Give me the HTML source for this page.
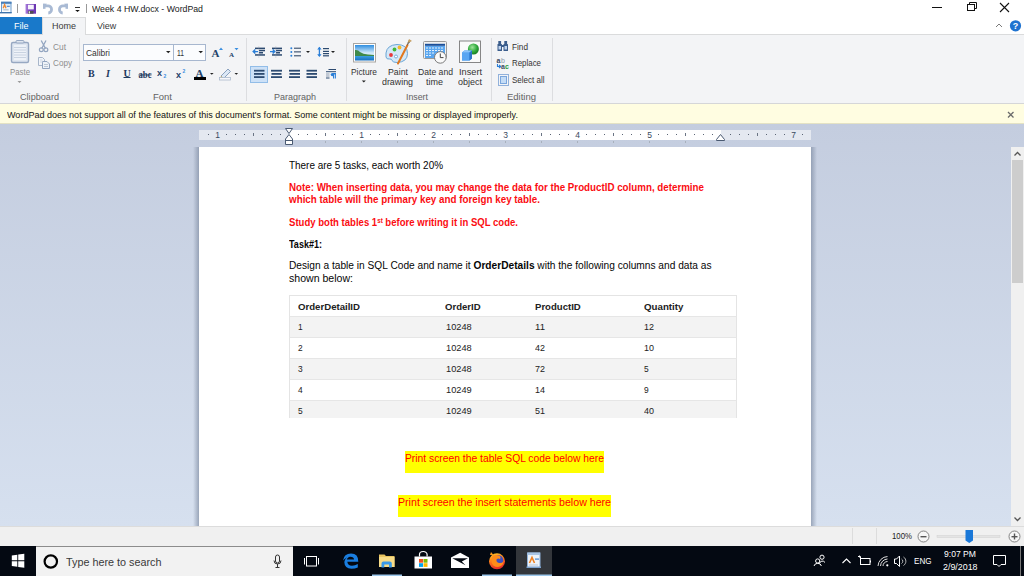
<!DOCTYPE html>
<html><head><meta charset="utf-8">
<style>
*{margin:0;padding:0;box-sizing:border-box}
html,body{width:1024px;height:576px;overflow:hidden;background:#fff;font-family:"Liberation Sans",sans-serif}
.a{position:absolute}
svg{position:absolute;overflow:visible}
.t{position:absolute;white-space:nowrap;line-height:1}
.ui{font-size:9px;color:#444}
#ribbon{left:0;top:34px;width:1024px;height:70px;background:#f3f4f6;border-top:1px solid #dadbdc;border-bottom:1px solid #d5d6d8}
#info{left:0;top:104px;width:1024px;height:20px;background:#fffde1;border-bottom:1px solid #e4e2c4}
#docbg{left:0;top:124px;width:1024px;height:402px;background:linear-gradient(#c4cddf,#d6e0ef)}
#page{left:199px;top:147px;width:612px;height:379px;background:#fff}
.shl{left:193px;top:147px;width:6px;height:379px;background:linear-gradient(to right,rgba(150,162,182,0),rgba(130,143,165,.72))}
.shr{left:811px;top:147px;width:6px;height:379px;background:linear-gradient(to right,rgba(130,143,165,.72),rgba(150,162,182,0))}
#status{left:0;top:526px;width:1024px;height:20px;background:#f0f0f0;border-top:1px solid #dcdcdc}
#task{left:0;top:546px;width:1024px;height:30px;background:#040912}
.sep{position:absolute;top:38px;width:1px;height:63px;background:#dcdde0}
.lbl{position:absolute;top:93px;font-size:9px;color:#626262;white-space:nowrap;line-height:1}
.rt{position:absolute;font-size:9px;color:#333;white-space:nowrap;line-height:1}
.dis{color:#8e8e8e}
.doc{font-size:10px;color:#050505}
.red{color:#fb0d12;font-weight:bold}
.tb{font-size:8.4px;color:#222}
.th{font-weight:bold}
.row{position:absolute;left:289px;width:448px;height:21px;border-left:1px solid #e4e4e4;border-right:1px solid #e4e4e4}
</style></head><body>
<div class="a" id="ribbon"></div>
<div class="a" id="info"></div>
<div class="a" id="docbg"></div>
<div class="a" id="page"></div>
<div class="a shl"></div><div class="a shr"></div>
<div class="a" id="status"></div>
<div class="a" id="task"></div>

<!-- ===== title bar ===== -->
<svg style="left:0;top:0" width="92" height="17">
 <defs><linearGradient id="wpi" x1="0" y1="0" x2="0" y2="1"><stop offset="0" stop-color="#cfe6f8"/><stop offset="1" stop-color="#ffffff"/></linearGradient>
 <linearGradient id="sav" x1="0" y1="0" x2="1" y2="0"><stop offset="0" stop-color="#b48ae0"/><stop offset="0.3" stop-color="#7a44c0"/><stop offset="1" stop-color="#6a34b0"/></linearGradient></defs>
 <rect x="1.5" y="2" width="9.5" height="10.5" fill="url(#wpi)" stroke="#6f9ccc" stroke-width="1"/>
 <rect x="1" y="2" width="10.5" height="1.8" fill="#4a7fb8"/>
 <path d="M3.2 8.2 L4.6 4.6 L6 8.2" stroke="#f08830" stroke-width="1.3" fill="none"/>
 <rect x="6.8" y="5.8" width="3" height="1" fill="#3a78c8"/>
 <rect x="3.3" y="9.3" width="5.3" height="1.1" fill="#aab8c8"/>
 <rect x="0" y="12" width="11.7" height="1.4" fill="#3f74ac"/>
 <rect x="25.5" y="4" width="10.5" height="9.7" fill="url(#sav)"/>
 <rect x="27.9" y="4.7" width="5.9" height="4.7" fill="#f6f4fa"/>
 <rect x="28" y="11" width="5.5" height="2.7" fill="#505050"/>
 <rect x="28.7" y="11.3" width="1.3" height="2.2" fill="#e8e8e8"/>
 <rect x="17" y="4" width="1" height="9" fill="#999"/>
 <path d="M44.5 5.8 H48 A3.4 3.6 0 0 1 48.3 13" stroke="#a9bad4" stroke-width="2.8" fill="none"/>
 <path d="M43 3.8 H47 L43 8.8 Z" fill="#a9bad4"/><rect x="43" y="3.8" width="2.5" height="5" fill="#a9bad4"/>
 <path d="M66.5 5.8 H63 A3.4 3.6 0 0 0 62.7 13" stroke="#a9bad4" stroke-width="2.8" fill="none"/>
 <path d="M68 3.8 H64 L68 8.8 Z" fill="#a9bad4"/><rect x="65.5" y="3.8" width="2.5" height="5" fill="#a9bad4"/>
 <rect x="75" y="7" width="5" height="1" fill="#333"/>
 <path d="M75.2 10 h4.6 l-2.3 2 z" fill="#111"/>
 <rect x="86" y="4" width="1" height="9" fill="#999"/>
</svg>
<div class="t" style="left:92px;top:5px;font-size:9px;color:#1a1a1a;transform:scaleX(0.9718);transform-origin:0 0">Week 4 HW.docx - WordPad</div>
<!-- window controls -->
<svg style="left:930px;top:0" width="94" height="17">
 <rect x="2" y="7" width="10" height="1" fill="#111"/>
 <rect x="37.5" y="4.5" width="7" height="6" fill="none" stroke="#111"/>
 <path d="M39.5 4.5 V2.5 H46.5 V8.5 H44.5" fill="none" stroke="#111"/>
 <path d="M70 3 L79 12 M79 3 L70 12" stroke="#111" stroke-width="1.1"/>
</svg>

<!-- ===== tabs ===== -->
<div class="a" style="left:0;top:17px;width:42px;height:17px;background:#1979ca"></div>
<div class="t ui" style="left:14px;top:22px;color:#fff">File</div>
<div class="a" style="left:42px;top:17px;width:44px;height:18px;background:#f3f4f6;border:1px solid #dadbdc;border-bottom:none"></div>
<div class="t ui" style="left:52px;top:22px;color:#3a3a3a">Home</div>
<div class="t ui" style="left:97px;top:22px;color:#3a3a3a">View</div>
<svg style="left:990px;top:17px" width="34" height="17">
 <path d="M6 10 L9 7 L12 10" stroke="#7a7a7a" stroke-width="1" fill="none"/>
 <circle cx="25.5" cy="8.8" r="5.6" fill="#1f73d0"/>
 <text x="25.5" y="12.2" font-size="9" font-weight="bold" fill="#fff" text-anchor="middle" font-family="Liberation Sans">?</text>
</svg>

<!-- ===== ribbon: clipboard ===== -->
<svg style="left:0;top:34px" width="80" height="69">
 <rect x="11.5" y="8.5" width="17" height="20" rx="1.5" fill="#dfe6f0" stroke="#97a8c2" stroke-width="1.4"/>
 <rect x="14" y="11" width="12" height="15" fill="#eef2f8"/>
 <path d="M14 13.5h12M14 16h12M14 18.5h12M14 21h12M14 23.5h12" stroke="#bfcadb" stroke-width="0.8"/>
 <rect x="16" y="6.5" width="8" height="2.5" rx="1" fill="#dfe6f0" stroke="#97a8c2"/>
 <path d="M17.5 47 h4 l-2 2 z" fill="#999"/>
 <path d="M41.2 6.5 L45.5 14.5 M46 6.5 L41.7 14.5" stroke="#93a5c0" stroke-width="1.3"/>
 <circle cx="41.3" cy="15.8" r="1.9" fill="none" stroke="#93a5c0" stroke-width="1.2"/>
 <circle cx="45.9" cy="15.8" r="1.9" fill="none" stroke="#93a5c0" stroke-width="1.2"/>
 <path d="M38.5 23.5 H42.5 L44.5 25.5 V31.5 H38.5 Z" fill="#f2f5fa" stroke="#a8b6ca"/>
 <path d="M42.5 27.5 H47 L49.5 30 V34.5 H42.5 Z" fill="#eef2f8" stroke="#93a5c0"/>
 <path d="M44 30.5h4M44 32.5h4" stroke="#b0bccc" stroke-width="0.8"/>
 <path d="M40 26h2.5M40 28h3" stroke="#c0cad8" stroke-width="0.7"/>
</svg>
<div class="rt dis" style="left:10px;top:68px;transform:scaleX(0.8690);transform-origin:0 0">Paste</div>
<div class="rt dis" style="left:53px;top:43px;transform:scaleX(0.9275);transform-origin:0 0">Cut</div>
<div class="rt dis" style="left:53px;top:59px;transform:scaleX(0.9041);transform-origin:0 0">Copy</div>

<!-- ===== ribbon: font ===== -->
<div class="a" style="left:83px;top:44px;width:123px;height:17px;background:#fbfcfe;border:1px solid #a7b7cf"></div>
<div class="a" style="left:173px;top:45px;width:1px;height:15px;background:#a7b7cf"></div>
<div class="rt" style="left:86px;top:49px;color:#333;transform:scaleX(0.9406);transform-origin:0 0">Calibri</div>
<div class="rt" style="left:177px;top:49px;color:#333;transform:scaleX(0.7492);transform-origin:0 0">11</div>
<svg style="left:80px;top:34px" width="166" height="69">
 <path d="M86 17 h4.5 l-2.25 2.25 z" fill="#222"/>
 <path d="M118.5 17 h4.5 l-2.25 2.25 z" fill="#222"/>
 <text x="131.5" y="23" font-size="11" font-weight="bold" fill="#23436b" font-family="Liberation Serif">A</text>
 <path d="M139 16 l2 -2.5 l2 2.5 z" fill="#3a8ee0"/>
 <text x="149" y="23" font-size="7" font-weight="bold" fill="#23436b" font-family="Liberation Serif">A</text>
 <path d="M154.5 14 h4 l-2 2.3 z" fill="#3a8ee0"/>
 <text x="8" y="43" font-size="10" font-weight="bold" fill="#1f3a5f" font-family="Liberation Serif">B</text>
 <text x="26" y="43" font-size="10" font-style="italic" font-weight="bold" fill="#1f3a5f" font-family="Liberation Serif">I</text>
 <text x="43.5" y="42.5" font-size="10" font-weight="bold" fill="#1f3a5f" font-family="Liberation Serif">U</text>
 <rect x="43.5" y="43" width="7" height="1" fill="#1f3a5f"/>
 <text x="58.5" y="43.5" font-size="9.5" font-weight="bold" fill="#1f3a5f" font-family="Liberation Serif" textLength="13" lengthAdjust="spacingAndGlyphs">abc</text>
 <rect x="58.5" y="40.5" width="13" height="0.9" fill="#1f3a5f"/>
 <text x="77" y="42" font-size="9" font-weight="bold" fill="#23436b" font-family="Liberation Sans">x</text>
 <text x="83.5" y="44" font-size="5" font-weight="bold" fill="#3a8ee0" font-family="Liberation Sans">2</text>
 <text x="96" y="43.5" font-size="9" font-weight="bold" fill="#23436b" font-family="Liberation Sans">x</text>
 <text x="102.5" y="38.5" font-size="5" font-weight="bold" fill="#3a8ee0" font-family="Liberation Sans">2</text>
 <text x="115.5" y="42.5" font-size="11" font-weight="bold" fill="#23436b" font-family="Liberation Serif">A</text>
 <rect x="114" y="43" width="12" height="3" fill="#000"/>
 <path d="M130 39 h3.6 l-1.8 1.8 z" fill="#222"/>
 <path d="M141 42 L148 35 L150.5 37.5 L143.5 44.5 Z" fill="#dce8f5" stroke="#7f97b8" stroke-width="0.9"/>
 <path d="M141 42 L140 45 L143.5 44.5 Z" fill="#e0b030"/>
 <rect x="139.5" y="43.5" width="11" height="2.5" fill="#f8f8fa" stroke="#aab8cc" stroke-width="0.8"/>
 <path d="M154.5 39 h3.6 l-1.8 1.8 z" fill="#222"/>
</svg>

<!-- ===== ribbon: paragraph ===== -->
<div class="a" style="left:250px;top:66px;width:18px;height:17px;background:#cde1f7;border:1px solid #92bde8"></div>
<svg style="left:246px;top:34px" width="100" height="69">
 <g fill="#2c4a70">
  <rect x="9" y="13.6" width="10" height="1.5"/><rect x="13" y="15.8" width="6" height="1.5"/><rect x="13" y="18" width="4" height="1.5"/><rect x="9" y="20.2" width="10" height="1.5"/>
  <rect x="26" y="13.6" width="10" height="1.5"/><rect x="30" y="15.8" width="6" height="1.5"/><rect x="30" y="18" width="4" height="1.5"/><rect x="26" y="20.2" width="10" height="1.5"/>
 </g>
 <path d="M12.8 12.5 V23.5 M29.8 12.5 V23.5" stroke="#9aa4b4" stroke-width="0.6" stroke-dasharray="1 1"/>
 <path d="M12 17.6 H7.5 M9.3 15.6 L7.2 17.6 L9.3 19.6" stroke="#2a7fd8" stroke-width="1.4" fill="none"/>
 <path d="M24 17.6 H28.5 M26.7 15.6 L28.8 17.6 L26.7 19.6" stroke="#2a7fd8" stroke-width="1.4" fill="none"/>
 <g fill="#2a7fd8"><circle cx="45.3" cy="14.3" r="1"/><circle cx="45.3" cy="17.9" r="1"/><circle cx="45.3" cy="21.8" r="1"/></g>
 <g fill="#53657e"><rect x="48" y="13.6" width="7" height="1.3"/><rect x="48" y="17.2" width="7" height="1.3"/><rect x="48" y="21.1" width="7" height="1.3"/></g>
 <path d="M60 17 h4 l-2 2 z" fill="#222"/>
 <path d="M73.4 13.5 v8.5" stroke="#2a7fd8" stroke-width="1.3" fill="none"/>
 <path d="M71.2 15.5 L73.4 12.8 L75.6 15.5 Z M71.2 20.2 L73.4 23 L75.6 20.2 Z" fill="#2a7fd8"/>
 <g fill="#2c4a70"><rect x="77" y="14" width="6" height="1.2"/><rect x="77" y="16.8" width="6" height="1.2"/><rect x="77" y="19" width="6" height="1.2"/><rect x="77" y="21.2" width="6" height="1.2"/></g>
 <path d="M85 17 h4 l-2 2 z" fill="#222"/>
 <g fill="#2c4a70">
  <rect x="8" y="35.8" width="10.5" height="1.8"/><rect x="8" y="39" width="10.5" height="1.8"/><rect x="8" y="42.2" width="10.5" height="1.8"/>
  <rect x="25" y="35.8" width="11" height="1.8"/><rect x="25.5" y="39" width="10" height="1.8"/><rect x="25" y="42.2" width="11" height="1.8"/>
  <rect x="43" y="35.8" width="11" height="1.8"/><rect x="43.5" y="39" width="10.5" height="1.8"/><rect x="43" y="42.2" width="11" height="1.8"/>
  <rect x="60.5" y="35.8" width="10.5" height="1.8"/><rect x="60.5" y="39" width="10.5" height="1.8"/><rect x="60.5" y="42.2" width="10.5" height="1.8"/>
  <rect x="82.5" y="35" width="7.5" height="1"/><rect x="80" y="37.2" width="10" height="1"/><rect x="80" y="39.5" width="3.5" height="1" opacity="0.5"/><rect x="80" y="41.5" width="3.5" height="1" opacity="0.5"/><rect x="80" y="43.5" width="3.5" height="1"/>
 </g>
 <circle cx="86.3" cy="40.6" r="1.6" fill="#2a7fd8"/><rect x="86.3" y="39" width="3.5" height="1.4" fill="#2a7fd8"/><rect x="87" y="39" width="1.1" height="5.5" fill="#2a7fd8"/><rect x="88.8" y="39" width="1.1" height="5.5" fill="#2a7fd8"/>
</svg>

<!-- ===== ribbon: insert ===== -->
<svg style="left:346px;top:34px" width="146" height="69">
 <defs>
  <linearGradient id="sky" x1="0" y1="0" x2="0" y2="1"><stop offset="0" stop-color="#2f8ee0"/><stop offset="0.5" stop-color="#cfe8f8"/><stop offset="1" stop-color="#e8f4fb"/></linearGradient>
  <linearGradient id="sea" x1="0" y1="0" x2="0" y2="1"><stop offset="0" stop-color="#3aa0e0"/><stop offset="1" stop-color="#1a70c0"/></linearGradient>
  <radialGradient id="ball" cx="0.4" cy="0.35" r="0.7"><stop offset="0" stop-color="#9fe59a"/><stop offset="0.6" stop-color="#2ea83a"/><stop offset="1" stop-color="#14761e"/></radialGradient>
 </defs>
 <rect x="7.5" y="9.5" width="22" height="18.5" fill="#fff" stroke="#a9a6a2"/>
 <rect x="9" y="11" width="19" height="15.5" fill="url(#sky)"/>
 <path d="M9 16 Q12 15.5 14 18 Q17 20 22 20.5 L28 21 V22.5 H9 Z" fill="#3f8a4a"/>
 <rect x="9" y="22" width="19" height="4.5" fill="url(#sea)"/>
 <path d="M40 19 Q41 11 51 10.5 Q61.5 10.5 61.5 19.5 Q61.5 28 51 28.5 Q47 28.5 46 26.5 Q45.5 24.5 43.5 25 Q40.5 25.5 40 23 Z" fill="#d4e8f8" stroke="#5c9cd0" stroke-width="0.9"/>
 <circle cx="45" cy="21" r="1.9" fill="#e8383a"/>
 <circle cx="48.5" cy="15.5" r="1.9" fill="#44b838"/>
 <circle cx="53.5" cy="13.5" r="1.9" fill="#f8b828"/>
 <circle cx="50" cy="22.5" r="1.5" fill="#fff" stroke="#5c9cd0" stroke-width="0.8"/>
 <path d="M52 29.5 L61.5 11" stroke="#e07820" stroke-width="2" stroke-linecap="round"/>
 <path d="M60.5 12 L62.5 6.5 L64.5 7.5 Z" fill="#555"/>
 <path d="M61.5 9 L63 5 L66 7 Z" fill="#c8a060"/>
 <rect x="77.5" y="7.5" width="23" height="17" rx="1" fill="#f0f0f0" stroke="#9a9a9a"/>
 <rect x="79" y="9.8" width="20" height="2" fill="#1a4f9a"/>
 <rect x="79" y="12" width="20" height="12" fill="#5aa6ef"/>
 <g fill="#fff" opacity="0.85">
  <rect x="80" y="13.5" width="2" height="1"/><rect x="83" y="13.5" width="2" height="1"/><rect x="86" y="13.5" width="2" height="1"/><rect x="89" y="13.5" width="2" height="1"/><rect x="92" y="13.5" width="2" height="1"/><rect x="95" y="13.5" width="2" height="1"/>
  <rect x="80" y="16" width="2" height="1"/><rect x="83" y="16" width="2" height="1"/><rect x="86" y="16" width="2" height="1"/><rect x="89" y="16" width="2" height="1"/><rect x="92" y="16" width="2" height="1"/><rect x="95" y="16" width="2" height="1"/>
  <rect x="80" y="18.5" width="2" height="1"/><rect x="83" y="18.5" width="2" height="1"/><rect x="86" y="18.5" width="2" height="1"/>
  <rect x="80" y="21" width="2" height="1"/><rect x="83" y="21" width="2" height="1"/>
 </g>
 <circle cx="94.3" cy="23.4" r="5.8" fill="#fafafa" stroke="#7a7a7a" stroke-width="1"/>
 <path d="M94.3 19.5 V23.6 H97.5" stroke="#333" stroke-width="0.9" fill="none"/>
 <rect x="113.5" y="7" width="21" height="21.5" fill="#fafafa" stroke="#7a7a7a" stroke-width="0.9"/>
 <circle cx="127.4" cy="15" r="5.5" fill="url(#ball)"/>
 <path d="M116 18.5 L118.5 16.5 H126 V24.5 L123.5 26.5 H116 Z" fill="#3b8ee8"/>
 <rect x="116" y="18.5" width="7.5" height="8" fill="#5aa6f2"/>
 <path d="M116 18.5 L118.5 16.5 H126 L123.5 18.5 Z" fill="#8cc4fa"/>
 <path d="M123.5 18.5 L126 16.5 V24.5 L123.5 26.5 Z" fill="#2d74c8"/>
 <path d="M15.8 46.5 h4 l-2 2 z" fill="#222"/>
</svg>
<div class="rt" style="left:351px;top:68px;transform:scaleX(0.9281);transform-origin:0 0">Picture</div>
<div class="rt" style="left:388px;top:68px;transform:scaleX(0.9749);transform-origin:0 0">Paint</div>
<div class="rt" style="left:382px;top:78px;transform:scaleX(0.9832);transform-origin:0 0">drawing</div>
<div class="rt" style="left:418px;top:68px;transform:scaleX(0.9581);transform-origin:0 0">Date and</div>
<div class="rt" style="left:426px;top:78px;transform:scaleX(0.9991);transform-origin:0 0">time</div>
<div class="rt" style="left:459px;top:68px;transform:scaleX(1.0215);transform-origin:0 0">Insert</div>
<div class="rt" style="left:458px;top:78px;transform:scaleX(0.9987);transform-origin:0 0">object</div>

<!-- ===== ribbon: editing ===== -->
<svg style="left:492px;top:34px" width="60" height="69">
 <g fill="#3b5d8c">
  <rect x="5.5" y="10" width="4.5" height="7" rx="0.5"/>
  <rect x="11.5" y="10" width="4.5" height="7" rx="0.5"/>
  <rect x="6.3" y="7" width="2.8" height="3"/>
  <rect x="12.3" y="7" width="2.8" height="3"/>
  <rect x="9.5" y="11" width="2.5" height="2"/>
 </g>
 <rect x="6.5" y="12" width="2.5" height="3.5" fill="#c0d4ee"/>
 <rect x="12.5" y="12" width="2.5" height="3.5" fill="#c0d4ee"/>
 <text x="4.5" y="29" font-size="7" font-weight="bold" fill="#3a4a5e" font-family="Liberation Sans">a</text>
 <text x="9" y="29" font-size="7" fill="#8a96a6" font-family="Liberation Sans">b</text>
 <text x="9" y="34.5" font-size="7" font-weight="bold" fill="#3a4a5e" font-family="Liberation Sans">a</text>
 <text x="13" y="34.5" font-size="7" font-weight="bold" fill="#2a9a3a" font-family="Liberation Sans">c</text>
 <path d="M5.5 30 V32.5 H8.5 M7 31 L8.8 32.5 L7 34" stroke="#2a7fd8" stroke-width="1.1" fill="none"/>
 <rect x="6.5" y="40.5" width="10" height="11" fill="none" stroke="#2f6fc0" stroke-width="1" stroke-dasharray="1 1"/>
 <rect x="8.5" y="42.5" width="6" height="7" fill="#c4dcf6" stroke="#7aa6dc" stroke-width="1"/>
</svg>
<div class="rt" style="left:512px;top:43px;transform:scaleX(0.9135);transform-origin:0 0">Find</div>
<div class="rt" style="left:512px;top:59px;transform:scaleX(0.8780);transform-origin:0 0">Replace</div>
<div class="rt" style="left:512px;top:76px;transform:scaleX(0.8896);transform-origin:0 0">Select all</div>

<!-- ribbon labels -->
<div class="lbl" style="left:20px;transform:scaleX(1.0122);transform-origin:0 0">Clipboard</div>
<div class="lbl" style="left:153px;transform:scaleX(1.0546);transform-origin:0 0">Font</div>
<div class="lbl" style="left:274px;transform:scaleX(0.9993);transform-origin:0 0">Paragraph</div>
<div class="lbl" style="left:406px;transform:scaleX(0.9771);transform-origin:0 0">Insert</div>
<div class="lbl" style="left:507px;transform:scaleX(1.0533);transform-origin:0 0">Editing</div>
<div class="sep" style="left:79px"></div>
<div class="sep" style="left:246px"></div>
<div class="sep" style="left:346px"></div>
<div class="sep" style="left:491px"></div>
<div class="sep" style="left:552px"></div>

<!-- ===== info bar ===== -->
<div class="t" style="left:7px;top:111px;font-size:9px;color:#111;transform:scaleX(1.0036);transform-origin:0 0">WordPad does not support all of the features of this document's format. Some content might be missing or displayed improperly.</div>
<svg style="left:1005px;top:109px" width="12" height="12">
 <path d="M3 3 L8.5 8.5 M8.5 3 L3 8.5" stroke="#6a6a6a" stroke-width="1.3"/>
</svg>

<!-- ===== ruler ===== -->
<div class="a" style="left:199px;top:130px;width:612px;height:10px;background:#e4e8f0"></div>
<div class="a" style="left:289px;top:130px;width:432px;height:10px;background:#fff"></div>
<svg style="left:0;top:124px" width="1011" height="23"><rect x="208" y="10" width="1" height="1" fill="#5a6474"/><text x="217.5" y="14" font-size="8.5" fill="#3a4a5e" text-anchor="middle" font-family="Liberation Sans">1</text><rect x="226" y="10" width="1" height="1" fill="#5a6474"/><rect x="235" y="10" width="1" height="1" fill="#5a6474"/><rect x="244" y="10" width="1" height="1" fill="#5a6474"/><rect x="253" y="9" width="1" height="3" fill="#6a7484"/><rect x="262" y="10" width="1" height="1" fill="#5a6474"/><rect x="271" y="10" width="1" height="1" fill="#5a6474"/><rect x="280" y="10" width="1" height="1" fill="#5a6474"/><rect x="298" y="10" width="1" height="1" fill="#5a6474"/><rect x="307" y="10" width="1" height="1" fill="#5a6474"/><rect x="316" y="10" width="1" height="1" fill="#5a6474"/><rect x="325" y="9" width="1" height="3" fill="#6a7484"/><rect x="334" y="10" width="1" height="1" fill="#5a6474"/><rect x="343" y="10" width="1" height="1" fill="#5a6474"/><rect x="352" y="10" width="1" height="1" fill="#5a6474"/><text x="361.5" y="14" font-size="8.5" fill="#3a4a5e" text-anchor="middle" font-family="Liberation Sans">1</text><rect x="370" y="10" width="1" height="1" fill="#5a6474"/><rect x="379" y="10" width="1" height="1" fill="#5a6474"/><rect x="388" y="10" width="1" height="1" fill="#5a6474"/><rect x="397" y="9" width="1" height="3" fill="#6a7484"/><rect x="406" y="10" width="1" height="1" fill="#5a6474"/><rect x="415" y="10" width="1" height="1" fill="#5a6474"/><rect x="424" y="10" width="1" height="1" fill="#5a6474"/><text x="433.5" y="14" font-size="8.5" fill="#3a4a5e" text-anchor="middle" font-family="Liberation Sans">2</text><rect x="442" y="10" width="1" height="1" fill="#5a6474"/><rect x="451" y="10" width="1" height="1" fill="#5a6474"/><rect x="460" y="10" width="1" height="1" fill="#5a6474"/><rect x="469" y="9" width="1" height="3" fill="#6a7484"/><rect x="478" y="10" width="1" height="1" fill="#5a6474"/><rect x="487" y="10" width="1" height="1" fill="#5a6474"/><rect x="496" y="10" width="1" height="1" fill="#5a6474"/><text x="505.5" y="14" font-size="8.5" fill="#3a4a5e" text-anchor="middle" font-family="Liberation Sans">3</text><rect x="514" y="10" width="1" height="1" fill="#5a6474"/><rect x="523" y="10" width="1" height="1" fill="#5a6474"/><rect x="532" y="10" width="1" height="1" fill="#5a6474"/><rect x="541" y="9" width="1" height="3" fill="#6a7484"/><rect x="550" y="10" width="1" height="1" fill="#5a6474"/><rect x="559" y="10" width="1" height="1" fill="#5a6474"/><rect x="568" y="10" width="1" height="1" fill="#5a6474"/><text x="577.5" y="14" font-size="8.5" fill="#3a4a5e" text-anchor="middle" font-family="Liberation Sans">4</text><rect x="586" y="10" width="1" height="1" fill="#5a6474"/><rect x="595" y="10" width="1" height="1" fill="#5a6474"/><rect x="604" y="10" width="1" height="1" fill="#5a6474"/><rect x="613" y="9" width="1" height="3" fill="#6a7484"/><rect x="622" y="10" width="1" height="1" fill="#5a6474"/><rect x="631" y="10" width="1" height="1" fill="#5a6474"/><rect x="640" y="10" width="1" height="1" fill="#5a6474"/><text x="649.5" y="14" font-size="8.5" fill="#3a4a5e" text-anchor="middle" font-family="Liberation Sans">5</text><rect x="658" y="10" width="1" height="1" fill="#5a6474"/><rect x="667" y="10" width="1" height="1" fill="#5a6474"/><rect x="676" y="10" width="1" height="1" fill="#5a6474"/><rect x="685" y="9" width="1" height="3" fill="#6a7484"/><rect x="694" y="10" width="1" height="1" fill="#5a6474"/><rect x="703" y="10" width="1" height="1" fill="#5a6474"/><rect x="712" y="10" width="1" height="1" fill="#5a6474"/><rect x="730" y="10" width="1" height="1" fill="#5a6474"/><rect x="739" y="10" width="1" height="1" fill="#5a6474"/><rect x="748" y="10" width="1" height="1" fill="#5a6474"/><rect x="757" y="9" width="1" height="3" fill="#6a7484"/><rect x="766" y="10" width="1" height="1" fill="#5a6474"/><rect x="775" y="10" width="1" height="1" fill="#5a6474"/><rect x="784" y="10" width="1" height="1" fill="#5a6474"/><text x="793.5" y="14" font-size="8.5" fill="#3a4a5e" text-anchor="middle" font-family="Liberation Sans">7</text><rect x="802" y="10" width="1" height="1" fill="#5a6474"/><rect x="325" y="17" width="1" height="2" fill="#a8b0bc"/><rect x="361" y="17" width="1" height="2" fill="#a8b0bc"/><rect x="397" y="17" width="1" height="2" fill="#a8b0bc"/><rect x="433" y="17" width="1" height="2" fill="#a8b0bc"/><rect x="469" y="17" width="1" height="2" fill="#a8b0bc"/><rect x="505" y="17" width="1" height="2" fill="#a8b0bc"/><rect x="541" y="17" width="1" height="2" fill="#a8b0bc"/><rect x="577" y="17" width="1" height="2" fill="#a8b0bc"/><rect x="613" y="17" width="1" height="2" fill="#a8b0bc"/><rect x="649" y="17" width="1" height="2" fill="#a8b0bc"/><rect x="685" y="17" width="1" height="2" fill="#a8b0bc"/><path d="M285.5 4.5 H292.5 L289 9.5 Z" fill="#fff" stroke="#4a5a72" stroke-width="1" stroke-linejoin="round"/><path d="M289 10.5 L285.5 15 V20.5 H292.5 V15 Z" fill="#fff" stroke="#4a5a72" stroke-width="1" stroke-linejoin="round"/><rect x="286" y="16" width="6" height="1" fill="#4a5a72"/><path d="M720.5 10.5 L716.5 15.5 V16.5 H724.5 V15.5 Z" fill="#fff" stroke="#4a5a72" stroke-width="1"/></svg>

<!-- ===== scrollbar ===== -->
<div class="a" style="left:1011px;top:147px;width:13px;height:379px;background:#f0f0f0"></div>
<div class="a" style="left:1012px;top:160px;width:11px;height:123px;background:#cdcdcd"></div>
<svg style="left:1011px;top:147px" width="13" height="379">
 <path d="M3.5 8.5 L6.5 5.5 L9.5 8.5" stroke="#555" stroke-width="1.3" fill="none"/>
 <path d="M3.5 370.5 L6.5 373.5 L9.5 370.5" stroke="#555" stroke-width="1.3" fill="none"/>
</svg>

<!-- ===== document ===== -->
<div class="t doc" style="left:289px;top:161px;transform:scaleX(0.9930);transform-origin:0 0">There are 5 tasks, each worth 20%</div>
<div class="t doc red" style="left:289px;top:183px;transform:scaleX(0.9763);transform-origin:0 0">Note: When inserting data, you may change the data for the ProductID column, determine</div>
<div class="t doc red" style="left:289px;top:195px;transform:scaleX(0.9818);transform-origin:0 0">which table will the primary key and foreign key table.</div>
<div class="t doc red" style="left:289px;top:218px;transform:scaleX(0.9561);transform-origin:0 0">Study both tables 1<span style="font-size:6.5px;position:relative;top:-3.5px">st</span> before writing it in SQL code.</div>
<div class="t doc" style="left:289px;top:240px;font-weight:bold;transform:scaleX(0.9037);transform-origin:0 0">Task#1:</div>
<div class="t doc" style="left:289px;top:261px;transform:scaleX(1.0170);transform-origin:0 0">Design a table in SQL Code and name it <b>OrderDetails</b> with the following columns and data as</div>
<div class="t doc" style="left:289px;top:274px;transform:scaleX(1.0562);transform-origin:0 0">shown below:</div>

<!-- table -->
<div class="row" style="top:295px;border-top:1px solid #e4e4e4;background:#fff;height:21px"></div>
<div class="row" style="top:316px;background:#f3f3f3;border-top:1px solid #e6e6e6"></div>
<div class="row" style="top:337px;background:#fff;border-top:1px solid #e6e6e6"></div>
<div class="row" style="top:358px;background:#f3f3f3;border-top:1px solid #e6e6e6"></div>
<div class="row" style="top:379px;background:#fff;border-top:1px solid #e6e6e6"></div>
<div class="row" style="top:400px;background:#f3f3f3;border-top:1px solid #e6e6e6;height:18px"></div>
<div class="t tb th" style="left:298px;top:303px;transform:scaleX(1.1481);transform-origin:0 0">OrderDetailID</div>
<div class="t tb th" style="left:445px;top:303px;transform:scaleX(1.1415);transform-origin:0 0">OrderID</div>
<div class="t tb th" style="left:535px;top:303px;transform:scaleX(1.1421);transform-origin:0 0">ProductID</div>
<div class="t tb th" style="left:644px;top:303px;transform:scaleX(1.1599);transform-origin:0 0">Quantity</div>
<div class="t tb" style="left:298px;top:323px">1</div><div class="t tb" style="left:446px;top:323px;transform:scaleX(1.1032);transform-origin:0 0">10248</div><div class="t tb" style="left:535px;top:323px;transform:scaleX(1.1490);transform-origin:0 0">11</div><div class="t tb" style="left:644px;top:323px;transform:scaleX(1.0720);transform-origin:0 0">12</div>
<div class="t tb" style="left:298px;top:344px">2</div><div class="t tb" style="left:446px;top:344px;transform:scaleX(1.1032);transform-origin:0 0">10248</div><div class="t tb" style="left:535px;top:344px;transform:scaleX(1.0720);transform-origin:0 0">42</div><div class="t tb" style="left:644px;top:344px;transform:scaleX(1.0720);transform-origin:0 0">10</div>
<div class="t tb" style="left:298px;top:365px">3</div><div class="t tb" style="left:446px;top:365px;transform:scaleX(1.1032);transform-origin:0 0">10248</div><div class="t tb" style="left:535px;top:365px;transform:scaleX(1.0720);transform-origin:0 0">72</div><div class="t tb" style="left:644px;top:365px">5</div>
<div class="t tb" style="left:298px;top:386px">4</div><div class="t tb" style="left:446px;top:386px;transform:scaleX(1.1032);transform-origin:0 0">10249</div><div class="t tb" style="left:535px;top:386px;transform:scaleX(1.0720);transform-origin:0 0">14</div><div class="t tb" style="left:644px;top:386px">9</div>
<div class="t tb" style="left:298px;top:407px">5</div><div class="t tb" style="left:446px;top:407px;transform:scaleX(1.1032);transform-origin:0 0">10249</div><div class="t tb" style="left:535px;top:407px;transform:scaleX(1.0720);transform-origin:0 0">51</div><div class="t tb" style="left:644px;top:407px;transform:scaleX(1.0720);transform-origin:0 0">40</div>

<!-- highlights -->
<div class="a" style="left:405px;top:451px;width:199px;height:22px;background:#ffff00"></div>
<div class="t doc" style="left:405px;top:454px;color:#f00;transform:scaleX(1.0307);transform-origin:0 0">Print screen the table SQL code below here</div>
<div class="a" style="left:398px;top:495px;width:213px;height:22px;background:#ffff00"></div>
<div class="t doc" style="left:398px;top:498px;color:#f00;transform:scaleX(1.0615);transform-origin:0 0">Print screen the insert statements below here</div>

<!-- ===== status bar ===== -->
<div class="a" style="left:852px;top:528px;width:1px;height:16px;background:#dcdcdc"></div>
<div class="a" style="left:876px;top:528px;width:1px;height:16px;background:#dcdcdc"></div>
<div class="t" style="left:892px;top:532px;font-size:9px;color:#222;transform:scaleX(0.8684);transform-origin:0 0">100%</div>
<svg style="left:915px;top:527px" width="109" height="19">
 <circle cx="8.5" cy="9.5" r="5.5" fill="#f6f6f6" stroke="#777" stroke-width="0.9"/>
 <rect x="5.5" y="9" width="6" height="1.4" fill="#555"/>
 <rect x="22" y="8.5" width="63" height="2" fill="#e4e4e4" stroke="#d0d0d0" stroke-width="0.5"/>
 <path d="M50.5 3 H58 V13.5 L54.25 16 L50.5 13.5 Z" fill="#1a78d8"/>
 <circle cx="99.5" cy="9.5" r="5.5" fill="#f6f6f6" stroke="#777" stroke-width="0.9"/>
 <rect x="96.5" y="9" width="6" height="1.4" fill="#555"/>
 <rect x="98.8" y="6.5" width="1.4" height="6" fill="#555"/>
</svg>

<!-- ===== taskbar ===== -->
<div class="a" style="left:36px;top:546px;width:257px;height:30px;background:#f2f2f2;border-top:1px solid #8c8c8c"></div>
<svg style="left:0;top:546px" width="1024" height="30">
 <g fill="#fff">
  <path d="M11.8 9.5 L17.3 8.7 V14.3 H11.8 Z"/>
  <path d="M18.2 8.6 L24.3 7.8 V14.3 H18.2 Z"/>
  <path d="M11.8 15.2 H17.3 V20.8 L11.8 20 Z"/>
  <path d="M18.2 15.2 H24.3 V21.7 L18.2 20.9 Z"/>
 </g>
 <circle cx="50.8" cy="15.5" r="6.2" fill="none" stroke="#000" stroke-width="2.2"/>
 <rect x="275.5" y="9" width="4" height="8" rx="2" fill="none" stroke="#333" stroke-width="1"/>
 <path d="M274 14.5 a3.5 3.5 0 0 0 7 0 M277.5 18 v3 M275.5 21.5 h4" stroke="#333" stroke-width="1" fill="none"/>
 <!-- task view -->
 <rect x="306.5" y="10.5" width="10" height="9.5" fill="none" stroke="#fff" stroke-width="1"/>
 <path d="M304.5 12 V18.5 M318.5 12 V18.5" stroke="#fff" stroke-width="1"/>
 <!-- edge -->
 <path d="M343 14.5 Q344 7.5 351 7.5 Q358.5 7.5 358.3 15.8 H347.3 Q347.8 19.8 352 19.8 Q355 19.8 357.8 18 V21.5 Q355 22.8 351.5 22.8 Q344.5 22.5 344.3 16 Q345.5 11 349 11 Q347 12 346.8 13.5 H354 Q353.8 10.7 350.5 10.7 Q346 10.8 343 14.5 Z" fill="#1a7ee0"/>
 <!-- explorer -->
 <path d="M379 8.5 H384.5 L386 10 H394.5 V21 H379 Z" fill="#e8c460"/>
 <rect x="379" y="11" width="15.5" height="10" fill="#f8dc88"/>
 <path d="M381.5 21.5 V17.5 Q381.5 15.5 383.5 15.5 H389.8 Q391.8 15.5 391.8 17.5 V21.5 H389 V18.5 H384.3 V21.5 Z" fill="#3a9ae8"/>
 <rect x="372" y="28.5" width="30" height="1.5" fill="#9dc8ec"/>
 <!-- store -->
 <path d="M414.5 10.5 H432 V22.5 H414.5 Z" fill="#fff"/>
 <path d="M419.5 10.5 V8.5 a3.8 3 0 0 1 7.6 0 V10.5" stroke="#fff" stroke-width="1.2" fill="none"/>
 <rect x="419" y="13" width="4" height="3.7" fill="#f25022"/>
 <rect x="423.5" y="13" width="4" height="3.7" fill="#7fba00"/>
 <rect x="419" y="17.2" width="4" height="3.7" fill="#00a4ef"/>
 <rect x="423.5" y="17.2" width="4" height="3.7" fill="#ffb900"/>
 <!-- mail -->
 <path d="M451 11.6 L460.2 6.8 L469 11.6 V22 H451 Z" fill="#fff"/>
 <path d="M452.3 12.2 H468 L461.8 15.6 L465.5 19.3 Z" fill="#040912"/>
 <!-- firefox -->
 <defs><linearGradient id="ffg" x1="0" y1="0" x2="0.3" y2="1"><stop offset="0" stop-color="#ffcf2a"/><stop offset="0.5" stop-color="#ff7a1a"/><stop offset="1" stop-color="#e8302a"/></linearGradient></defs>
 <circle cx="497" cy="15.3" r="8" fill="url(#ffg)"/>
 <circle cx="498" cy="14.2" r="5.2" fill="#3e4fc0"/>
 <path d="M493 9.5 Q496 8.5 499 9.5 Q501.5 11 500 13 Q498 12 496.5 13.5 Q496 16 499 17 Q502 17.5 503.5 15.5 Q503 20 498 21 Q492.5 21 491.5 16 Q491 12 493 9.5Z" fill="#ff8c1a"/>
 <path d="M490 9 L491 6 L493.5 9 Z" fill="#ff9a1a"/>
 <rect x="482" y="28.5" width="30" height="1.5" fill="#9dc8ec"/>
 <!-- wordpad active -->
 <rect x="516" y="0" width="36" height="30" fill="#33363b"/>
 <rect x="516" y="28.5" width="36" height="1.5" fill="#9dc8ec"/>
 <rect x="527.5" y="7" width="12.5" height="14.5" fill="#eef3f9" stroke="#8fb0d8"/>
 <rect x="527.5" y="6.5" width="12.5" height="2.5" fill="#a8c4e4"/>
 <path d="M529.5 17 L532 11.5 L534.5 17" stroke="#f08020" stroke-width="1.6" fill="none"/>
 <rect x="535" y="12.5" width="4" height="1.2" fill="#4a88d0"/>
 <rect x="529" y="18.5" width="9" height="1" fill="#b8c8dc"/>
 <rect x="526.5" y="20.5" width="14.5" height="1.5" fill="#7fa4d0"/>
 <!-- tray -->
 <circle cx="822" cy="11.2" r="2.1" fill="none" stroke="#fff" stroke-width="1"/>
 <path d="M819.5 17.5 a3 3 0 0 1 5.5 -1" fill="none" stroke="#fff" stroke-width="1"/>
 <circle cx="817.7" cy="15" r="2.1" fill="none" stroke="#fff" stroke-width="1"/>
 <path d="M814 20 a3.8 3.5 0 0 1 7.4 0" fill="none" stroke="#fff" stroke-width="1"/>
 <path d="M842.5 17 L846.5 13 L850.5 17" stroke="#fff" stroke-width="1.1" fill="none"/>
 <rect x="860.5" y="12.5" width="9.5" height="6" fill="none" stroke="#fff" stroke-width="1"/>
 <rect x="870" y="14.5" width="1" height="2" fill="#fff"/>
 <path d="M858 10.5 h2.5 v3 M859.5 9.5 v2" stroke="#fff" stroke-width="1" fill="none"/>
 <path d="M878 20 a10 10 0 0 1 9.5 -9.5 M880.5 20 a7.3 7.3 0 0 1 7 -7 M883 20 a4.5 4.5 0 0 1 4.5 -4.5" stroke="#ddd" stroke-width="1" fill="none"/>
 <circle cx="887.3" cy="19.3" r="1.1" fill="#fff"/>
 <path d="M894.5 13 h2 l3 -3 v10.5 l-3 -3 h-2 z" fill="none" stroke="#fff" stroke-width="1"/>
 <path d="M901.5 13 a2.6 2.6 0 0 1 0 4.5 M903.5 11 a5 5 0 0 1 0 8.5" stroke="#ccc" stroke-width="0.9" fill="none"/>
 <path d="M993.5 9.5 H1005.5 V18.5 H1001 L999 20.5 L997 18.5 H993.5 Z" fill="none" stroke="#fff" stroke-width="1"/>
 <rect x="1020" y="0" width="1" height="30" fill="#777"/>
</svg>
<div class="t" style="left:66px;top:556.5px;font-size:11px;color:#3a3a3a;transform:scaleX(0.9822);transform-origin:0 0">Type here to search</div>
<div class="t" style="left:914px;top:556px;font-size:9.5px;color:#fff;transform:scaleX(0.8498);transform-origin:0 0">ENG</div>
<div class="t" style="left:944px;top:550px;font-size:9px;color:#fff;transform:scaleX(0.9543);transform-origin:0 0">9:07 PM</div>
<div class="t" style="left:943px;top:563px;font-size:9px;color:#fff;transform:scaleX(0.9844);transform-origin:0 0">2/9/2018</div>

</body></html>
